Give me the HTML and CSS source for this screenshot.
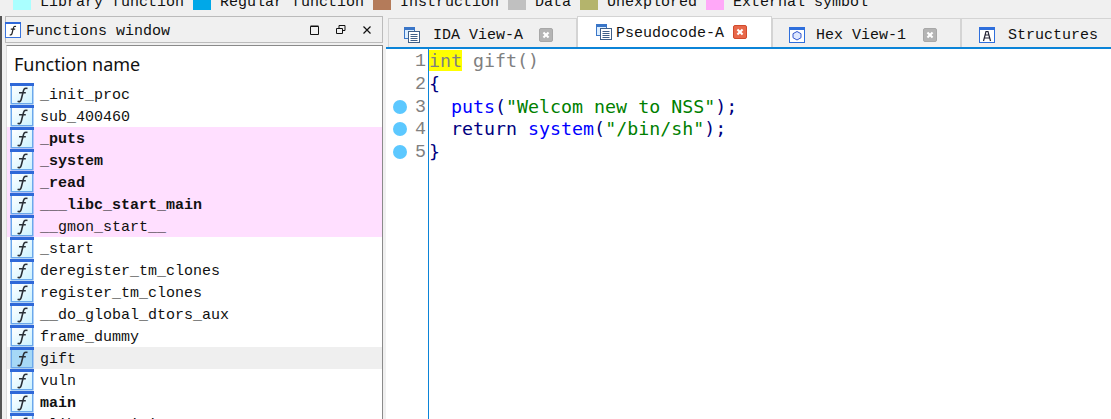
FILE: index.html
```html
<!DOCTYPE html>
<html lang="en">
<head>
<meta charset="utf-8">
<title>IDA</title>
<link rel="stylesheet" href="styles.css">
</head>
<body>
<svg class="defs" width="0" height="0" aria-hidden="true">
  <defs>
    <linearGradient id="fnfill" x1="0" y1="0" x2="1" y2="1">
      <stop offset="0" class="fs1"/>
      <stop offset="1" class="fs2"/>
    </linearGradient>
  </defs>
  <symbol id="fn" viewBox="0 0 24 22">
    <rect x="0.5" y="0.5" width="23" height="21" fill="#6aa8ec"/>
    <rect x="2" y="3" width="20" height="17" fill="url(#fnfill)"/>
    <rect x="0" y="0" width="24" height="3" fill="#2f68d8"/>
    <path d="M17.500 5.500c-2-.8-3.500 0-4 2.100L11.200 16.500c-.5 1.900-1.800 2.600-3.600 1.800M9 9.800h6.800" fill="none" stroke="#2a3038" stroke-width="1.600"/>
  </symbol>
  <symbol id="fnsel" viewBox="0 0 24 22">
    <rect x="0.5" y="0.5" width="23" height="21" fill="#6aa8ec"/>
    <rect x="2" y="3" width="20" height="17" fill="#a6d8f6"/>
    <rect x="0" y="0" width="24" height="3" fill="#2f68d8"/>
    <path d="M17.500 5.500c-2-.8-3.500 0-4 2.100L11.200 16.500c-.5 1.900-1.800 2.600-3.600 1.800M9 9.800h6.800" fill="none" stroke="#2a3038" stroke-width="1.600"/>
  </symbol>
  <symbol id="fnt" viewBox="0 0 16 16">
    <rect x="0.5" y="0.500" width="15" height="15" fill="#fff" stroke="#3a74dc"/>
    <rect x="0" y="0" width="16" height="2" fill="#2f68d8"/>
    <path d="M11 4.500c-1.300-.5-2.300 0-2.600 1.400L7 11.500c-.3 1.300-1.100 1.700-2.300 1.200M5.800 7.200h4.400" fill="none" stroke="#222" stroke-width="1.200"/>
  </symbol>
  <symbol id="doc" viewBox="0 0 16 16">
    <rect x="0.5" y="0.5" width="10" height="11" fill="#dceeff" stroke="#3a76c8"/>
    <rect x="0" y="0" width="11" height="3" fill="#3a76c8"/>
    <rect x="4.5" y="4.5" width="11" height="11" fill="#fff" stroke="#3f5f88"/>
    <path d="M6.500 7.500h7M6.500 9.500h7M6.500 11.500h7M6.500 13.500h7" stroke="#3f5f88"/>
  </symbol>
  <symbol id="close" viewBox="0 0 14 14">
    <path d="M4 4l6 6M10 4l-6 6" stroke="#fff" stroke-width="2.400"/>
  </symbol>
</svg>

<div class="legend">
  <span class="sw lib"></span><span class="lg w-lib">Library function</span>
  <span class="sw reg"></span><span class="lg w-reg">Regular function</span>
  <span class="sw ins"></span><span class="lg w-ins">Instruction</span>
  <span class="sw dat"></span><span class="lg w-dat">Data</span>
  <span class="sw une"></span><span class="lg w-une">Unexplored</span>
  <span class="sw ext"></span><span class="lg">External symbol</span>
</div>

<div class="main">
  <section class="left">
    <header class="ftitle">
      <svg class="ficon"><use href="#fnt"/></svg>
      <span class="ftext">Functions window</span>
      <span class="wbtns">
        <svg width="10" height="10" viewBox="0 0 10 10"><path d="M.5 1.500h8v8h-8zM.5 1h8" fill="none" stroke="#111"/></svg>
        <svg width="10" height="10" viewBox="0 0 10 10"><path d="M.5 3.500h6v5h-6zM3 3V.5h6v5H7" fill="none" stroke="#111"/></svg>
        <svg width="10" height="10" viewBox="0 0 10 10"><path d="M1.500 1.500l7 7M8.500 1.500l-7 7" fill="none" stroke="#111" stroke-width="1.200"/></svg>
      </span>
    </header>
    <div class="flist">
      <div class="fhead">Function name</div>
      <div class="row"><svg class="ic"><use href="#fn"/></svg><span>_init_proc</span></div>
      <div class="row"><svg class="ic"><use href="#fn"/></svg><span>sub_400460</span></div>
      <div class="row ext-row bold"><svg class="ic"><use href="#fn"/></svg><span>_puts</span></div>
      <div class="row ext-row bold"><svg class="ic"><use href="#fn"/></svg><span>_system</span></div>
      <div class="row ext-row bold"><svg class="ic"><use href="#fn"/></svg><span>_read</span></div>
      <div class="row ext-row bold"><svg class="ic"><use href="#fn"/></svg><span>___libc_start_main</span></div>
      <div class="row ext-row"><svg class="ic"><use href="#fn"/></svg><span>__gmon_start__</span></div>
      <div class="row"><svg class="ic"><use href="#fn"/></svg><span>_start</span></div>
      <div class="row"><svg class="ic"><use href="#fn"/></svg><span>deregister_tm_clones</span></div>
      <div class="row"><svg class="ic"><use href="#fn"/></svg><span>register_tm_clones</span></div>
      <div class="row"><svg class="ic"><use href="#fn"/></svg><span>__do_global_dtors_aux</span></div>
      <div class="row"><svg class="ic"><use href="#fn"/></svg><span>frame_dummy</span></div>
      <div class="row sel"><svg class="ic"><use href="#fnsel"/></svg><span>gift</span></div>
      <div class="row"><svg class="ic"><use href="#fn"/></svg><span>vuln</span></div>
      <div class="row bold"><svg class="ic"><use href="#fn"/></svg><span>main</span></div>
      <div class="row"><svg class="ic"><use href="#fn"/></svg><span>_libc_csu_init</span></div>
    </div>
  </section>

  <section class="right">
    <nav class="tabs">
      <div class="tab t1"><svg class="ti"><use href="#doc"/></svg><span class="tl">IDA View-A</span><svg class="x gray"><use href="#close"/></svg></div>
      <div class="tab active"><svg class="ti"><use href="#doc"/></svg><span class="tl">Pseudocode-A</span><svg class="x red"><use href="#close"/></svg></div>
      <div class="tab t3">
        <svg class="ti" viewBox="0 0 16 16"><rect x=".5" y=".5" width="15" height="15" fill="#fff" stroke="#2f6fdc"/><rect width="16" height="3" fill="#2f6fdc"/><path d="M8 4.500l4 2.200v4L8 13l-4-2.300v-4z" fill="#dfe8ff" stroke="#3355cc"/></svg>
        <span class="tl">Hex View-1</span><svg class="x gray"><use href="#close"/></svg>
      </div>
      <div class="tab t4">
        <svg class="ti" viewBox="0 0 16 16"><rect x=".5" y=".5" width="15" height="15" fill="#fff" stroke="#2f6fdc"/><rect width="16" height="3" fill="#2f6fdc"/><path d="M4.500 14L7 4.500h2L11.500 14M5.500 11h5M6.500 8h3" fill="none" stroke="#223" stroke-width="1.200"/></svg>
        <span class="tl">Structures</span>
      </div>
    </nav>
    <div class="code">
      <div class="gutter">
        <div class="ln">1</div>
        <div class="ln">2</div>
        <div class="ln"><i class="dot"></i>3</div>
        <div class="ln"><i class="dot"></i>4</div>
        <div class="ln"><i class="dot"></i>5</div>
      </div>
      <pre class="src"><span class="hl">int</span><span class="g"> gift()</span>
<span class="n">{</span>
<span class="n">  </span><span class="b">puts</span><span class="n">(</span><span class="s">"Welcom new to NSS"</span><span class="n">);</span>
<span class="n">  return </span><span class="b">system</span><span class="n">(</span><span class="s">"/bin/sh"</span><span class="n">);</span>
<span class="n">}</span></pre>
    </div>
  </section>
</div>
</body>
</html>
```
FILE: styles.css
```css
* { box-sizing: border-box; }
html, body { margin: 0; height: 100%; }
body { width: 1111px; height: 419px; overflow: hidden; background: #f0f0f0; font-family: "Liberation Mono", monospace; color: #111; position: relative; }
.defs { position: absolute; }
.fs1 { stop-color: #ffffff; }
.fs2 { stop-color: #cdf2ff; }

.legend { height: 16px; display: flex; align-items: flex-end; padding-left: 13px; font-size: 15px; overflow: hidden; }
.legend .sw { width: 18px; height: 10px; flex: none; align-self: flex-start; }
.lg { line-height: 16px; margin-left: 9px; position: relative; top: -5px; white-space: nowrap; flex: none; }
.w-lib { width: 153px; }
.w-reg { width: 153px; }
.w-ins { width: 108px; }
.w-dat { width: 36px; margin-right: 9px; }
.w-une { width: 90px; margin-right: 9px; }
.lib { background: #aaffff; }
.reg { background: #00a8e8; }
.ins { background: #b47b5a; }
.dat { background: #c0c0c0; }
.une { background: #b4b46c; }
.ext { background: #ffa8f8; }

.main { display: flex; height: 403px; }
.left { width: 385px; flex: none; padding-left: 3px; border-left: 2px solid #555; }
.ftitle { height: 27px; display: flex; align-items: center; background: #f0f0f0; border: 1px solid #bbb; width: 378px; }
.ficon { width: 16px; height: 16px; flex: none; margin-left: -1px; }
.ftext { margin-left: 5px; font-size: 15px; padding-top: 4px; }
.wbtns { margin-left: auto; display: flex; gap: 16px; padding-right: 10px; }

.flist { background: #fff; border: 1px solid #8a8a8a; border-bottom: 0; border-left-color: #ddd; height: 376px; width: 377px; margin: 2px 0 0 1px; overflow: hidden; }
.fhead { height: 37px; padding: 6px 0 0 7px; font: 18px/24px "Noto Sans", sans-serif; }
.row { height: 22px; display: flex; align-items: center; font-size: 15px; white-space: pre; }
.row .ic { width: 24px; height: 22px; margin-left: 3px; flex: none; }
.row span { margin-left: 6px; padding-top: 3px; }
.bold { font-weight: 700; }
.ext-row { background: #ffdfff; }
.sel { background: #efefef; }

.right { flex: 1; display: flex; flex-direction: column; min-width: 0; margin-left: 1px; }
.tabs { height: 33px; display: flex; align-items: flex-end; border-bottom: 2px solid #0b84d8; padding-left: 2px; font-size: 15px; }
.tab { height: 29px; display: flex; align-items: center; border: 1px solid #d4d4d4; border-bottom: 0; flex: none; padding-top: 3px; }
.t1 { width: 189px; padding-left: 15px; }
.active { width: 195px; height: 31px; background: #fff; padding: 0 0 0 18px; }
.t3 { width: 189px; padding-left: 16px; }
.t4 { flex: 1; padding-left: 17px; border-right: 0; }
.ti { width: 16px; height: 16px; flex: none; }
.tl { margin-left: 13px; white-space: pre; padding-top: 2px; }
.t3 .tl { margin-left: 11px; }
.t4 .tl { margin-left: 13px; }
.active .tl { margin-left: 4px; }
.x { width: 14px; height: 14px; margin-left: 16px; flex: none; border-radius: 2px; }
.t3 .x { margin-left: 17px; }
.active .x { margin-left: 9px; }
.gray { background: #b4b4b4; border: 1px solid #a8a8a8; }
.red { background: #e8684a; border: 1px solid #d04a2c; }

.code { flex: 1; display: flex; background: #fff; padding-top: 1px; }
.gutter { width: 42px; flex: none; background: #fff; }
.ln { height: 22.8px; font: 18.3px/22.8px "Liberation Mono", monospace; color: #808080; text-align: right; position: relative; padding-right: 2px; }
.dot { position: absolute; left: 7px; top: 4px; width: 14px; height: 14px; border-radius: 50%; background: #5cc8ff; }
.src { flex: 1; margin: -1px 0 0; padding-top: 1px; border-left: 1px solid #0b84d8; font: 18.3px/22.8px "DejaVu Sans Mono", monospace; }
.hl { background: #ffff00; color: #808080; }
.g { color: #808080; }
.n { color: #000080; }
.b { color: #0000ff; }
.s { color: #008000; }
```
